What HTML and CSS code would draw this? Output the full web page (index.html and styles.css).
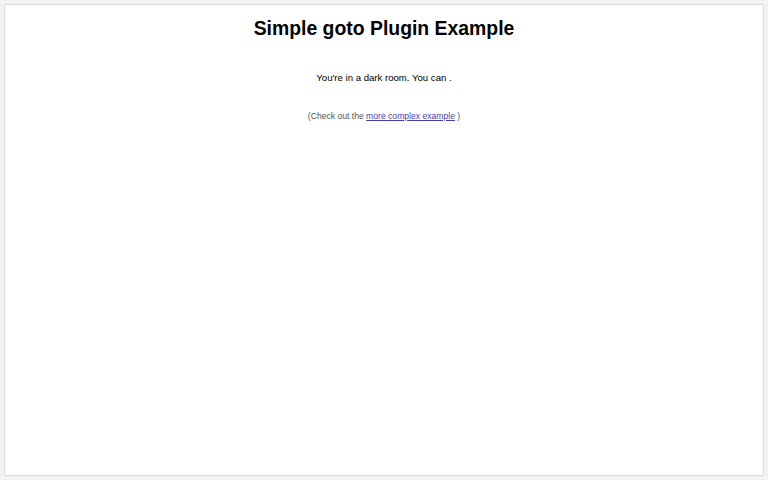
FILE: index.html
```html
<!DOCTYPE html>
<html>
<head>
<meta charset="utf-8">
<title>Simple goto Plugin Example</title>
<link rel="stylesheet" href="styles.css">
</head>
<body>
<div class="page">
  <h1 class="title">Simple goto Plugin Example</h1>
  <p class="story">You're in a dark room. You can .</p>
  <p class="note">(Check out the <a href="#" class="more">more complex example</a> )</p>
</div>
</body>
</html>
```
FILE: styles.css
```css
html, body {
  margin: 0;
  padding: 0;
  height: 100%;
}
body {
  background: #f2f2f2;
  font-family: "Liberation Sans", Arial, sans-serif;
  padding: 4px;
  box-sizing: border-box;
}
.page {
  background: #fff;
  border: 1px solid #dcdcdc;
  height: 100%;
  box-sizing: border-box;
  text-align: center;
  padding-top: 12px;
}
.title {
  margin: 0;
  font-size: 19.4px;
  font-weight: bold;
  line-height: 23px;
  color: #000;
}
.story {
  margin: 32px 0 0;
  font-size: 9.6px;
  line-height: 12px;
  color: #000;
}
.note {
  margin: 27px 0 0;
  font-size: 8.6px;
  line-height: 10px;
  color: #555;
}
.more {
  color: #4b3fb0;
}
```
